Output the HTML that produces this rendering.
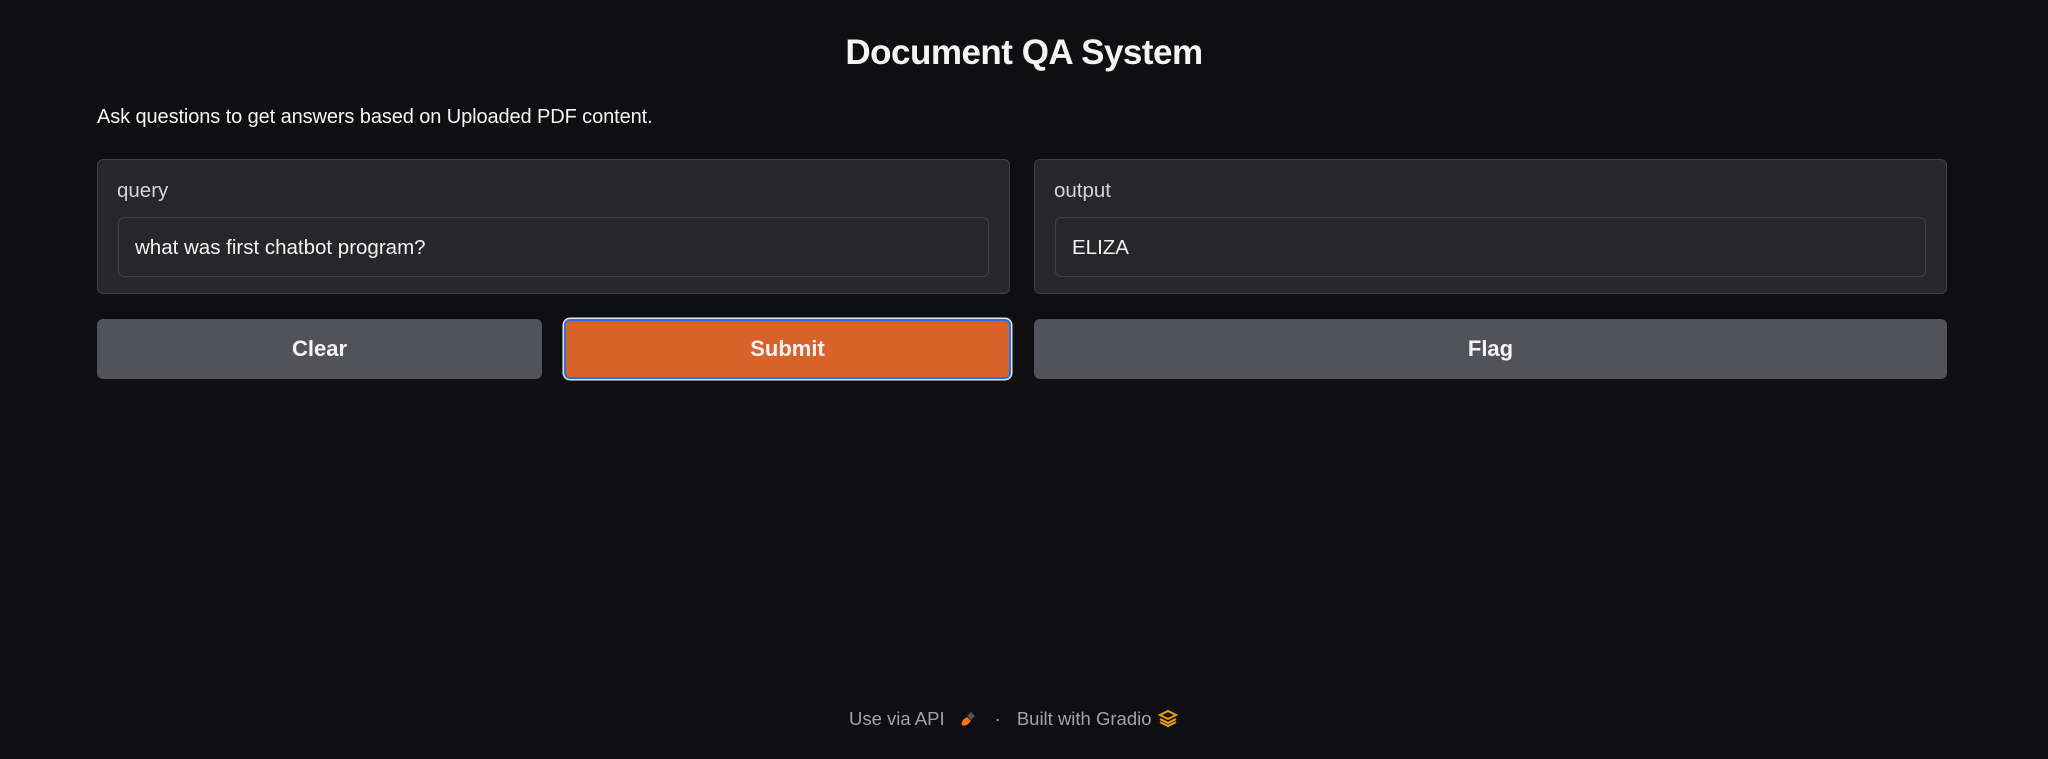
<!DOCTYPE html>
<html><head><meta charset="utf-8"><style>
*{box-sizing:border-box;margin:0;padding:0}
body{width:2048px;height:759px;background:#0f0f11;font-family:"Liberation Sans",sans-serif;color:#f4f4f5;position:relative;overflow:hidden}
.a{position:absolute}
h1{position:absolute;left:0;width:2048px;top:33px;text-align:center;font-size:35px;font-weight:bold;letter-spacing:-0.5px}
.desc{left:97px;top:106px;font-size:20px;letter-spacing:-0.1px}
.box{background:#27272a;border:1px solid #3f3f46;border-radius:6px;top:159px;height:135px}
.lbl{position:absolute;left:19px;top:19px;font-size:20.5px;color:#d4d4d8}
.inp{position:absolute;left:20px;right:20px;top:57px;height:60px;border:1px solid #3f3f46;border-radius:6px;background:#27272a;font-size:20.5px;padding:18px 16px}
.btn{top:319px;height:60px;border-radius:6px;background:#52525b;font-weight:bold;font-size:22px;display:flex;align-items:center;justify-content:center}
.foot{top:708px;left:849px;font-size:18.5px;color:#a1a1aa;display:flex;align-items:center;gap:6px}
</style></head><body>
<h1>Document QA System</h1>
<div class="a desc">Ask questions to get answers based on Uploaded PDF content.</div>
<div class="a box" style="left:97px;width:913px"><div class="lbl">query</div><div class="inp">what was first chatbot program?</div></div>
<div class="a box" style="left:1034px;width:913px"><div class="lbl">output</div><div class="inp">ELIZA</div></div>
<div class="a btn" style="left:97px;width:445px">Clear</div>
<div class="a btn" style="left:564px;width:447px;background:#d9622b;border:2px solid #2f6fdd;box-shadow:0 0 0 1.5px #e4e4e7">Submit</div>
<div class="a btn" style="left:1034px;width:913px">Flag</div>
<div class="a foot">Use via API
<svg width="22" height="20" viewBox="0 0 22 20" style="margin-left:6px"><path d="M14 3l4 4-4 4-4-4z" fill="#52525b"/><path d="M10 8l4 4-3 3c-2 2-5 2-6 1s0-4 2-6z" fill="#f97316"/></svg>
<span style="margin:0 10px">·</span>Built with Gradio
<svg width="20" height="18" viewBox="0 0 20 18"><path d="M10 1l8 4-8 4-8-4z" fill="none" stroke="#f59e0b" stroke-width="2"/><path d="M2 9l8 4 8-4M2 12l8 4 8-4" fill="none" stroke="#f59e0b" stroke-width="2"/></svg>
</div>
</body></html>
